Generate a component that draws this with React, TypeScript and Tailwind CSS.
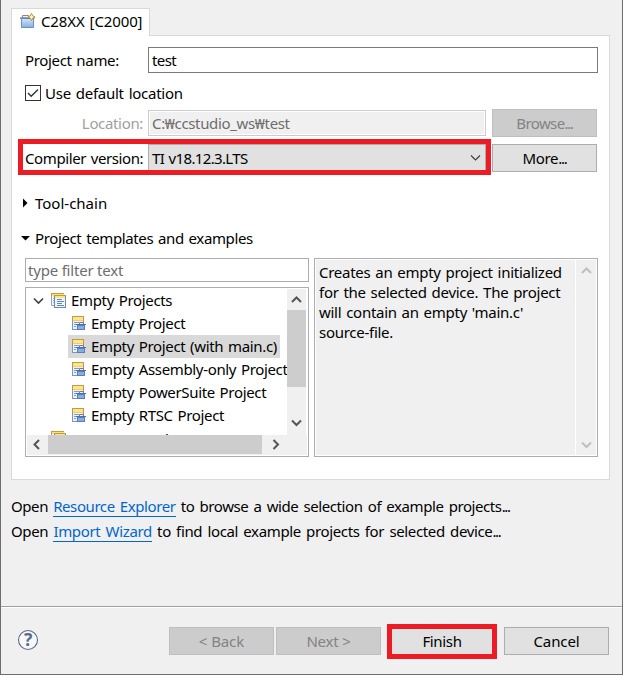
import { useState } from "react"
import type React from "react"

const Chevron: React.FC<{ className?: string; dir: "up" | "down" | "left" | "right"; thick?: number }> = ({
  className,
  dir,
  thick = 2,
}) => {
  const paths = {
    up: "M1 8 L5.5 3.5 L10 8",
    down: "M1 3.5 L5.5 8 L10 3.5",
    left: "M8 1 L3.5 5.5 L8 10",
    right: "M3.5 1 L8 5.5 L3.5 10",
  }
  return (
    <svg width="11" height="11" viewBox="0 0 11 11" className={className} fill="none" stroke="currentColor" strokeWidth={thick}>
      <path d={paths[dir]} />
    </svg>
  )
}

const ProjectTabIcon = () => (
  <svg width="16" height="16" viewBox="0 0 16 16" className="shrink-0">
    <defs>
      <linearGradient id="box" x1="0" y1="0" x2="0" y2="1">
        <stop offset="0" stopColor="#d3e5f8" />
        <stop offset="1" stopColor="#86aedd" />
      </linearGradient>
    </defs>
    <path d="M2.5 4.5v-2h6v2" fill="#f4eee4" stroke="#a08468" />
    <path d="M1.5 5.5h12v9h-12z" fill="url(#box)" stroke="#6a90c6" />
    <path d="M0 5h14.5" stroke="#5b7fb0" strokeWidth="1.4" />
    <path d="M11.5 0.5l1.2 2.3 2.3 1.2-2.3 1.2-1.2 2.3-1.2-2.3L8 4l2.3-1.2z" fill="#fff8d0" stroke="#b8902c" />
  </svg>
)

const FolderIcon = () => (
  <svg width="15" height="15" viewBox="0 0 15 15" className="shrink-0">
    <path d="M0.5 0.5h11v12h-11z" fill="#eef5fd" stroke="#8fa3bd" />
    <path d="M0 0.5h13M0.5 0v3" stroke="#c79a33" />
    <rect x="1" y="1" width="12" height="2" fill="#fbe08a" />
    <path d="M2 5.5h1M2 7.5h1M2 9.5h1" stroke="#9fb6d3" />
    <rect x="3.5" y="2.5" width="11" height="12" fill="#edf5fd" stroke="#7288a8" />
    <path d="M3 2.5h12" stroke="#c79a33" />
    <rect x="4" y="3" width="10" height="2" fill="#fbe38f" />
    <path d="M6 6.5h5M6 8.5h7M6 10.5h5M6 12.5h7" stroke="#6486b8" />
  </svg>
)

const TemplateIcon = () => (
  <svg width="14" height="14" viewBox="0 0 14 14" className="shrink-0">
    <rect x="0.5" y="0.5" width="11" height="13" fill="#e8f2fc" stroke="#7f95b4" />
    <rect x="0.5" y="0.5" width="11" height="4" fill="#fbe590" stroke="#c9983a" />
    <path d="M1 4.5h10" stroke="#f3cf62" />
    <path d="M2 6.5h5M2 8.5h2M2 10.5h2" stroke="#7f9dc6" />
    <path d="M7.5 8.5v-2h4v2" fill="none" stroke="#8a7480" />
    <path d="M4 8.5h10" stroke="#54709f" />
    <rect x="5.5" y="9.5" width="7" height="4" fill="#86aee4" stroke="#5a7dbb" />
  </svg>
)

const Dots = () => <span className="tracking-[-1.3px]">...</span>

const Button: React.FC<{ children: React.ReactNode; disabled?: boolean; className?: string }> = ({
  children,
  disabled,
  className = "",
}) => (
  <button
    disabled={disabled}
    className={`h-7 w-[105px] shrink-0 border text-center leading-[26px] ${
      disabled ? "border-[#bfbfbf] bg-[#cccccc] text-[#838383]" : "border-[#adadad] bg-[#e1e1e1] text-black"
    } ${className}`}
  >
    {children}
  </button>
)

const templates = [
  "Empty Project",
  "Empty Project (with main.c)",
  "Empty Assembly-only Project",
  "Empty PowerSuite Project",
  "Empty RTSC Project",
]

const TemplateTree = () => {
  const [selected, setSelected] = useState("Empty Project (with main.c)")

  return (
    <div className="mt-[5px] flex h-[170px] flex-col border border-[#abadb3] bg-white p-px">
      <div className="flex h-[146px]">
        <div className="w-[260px] overflow-hidden whitespace-nowrap">
          <div className="flex h-[23px] items-center pl-1.5">
            <Chevron dir="down" thick={1.6} className="text-[#404040]" />
            <span className="ml-[7px] flex"><FolderIcon /></span>
            <span className="ml-[5px] pb-0.5">Empty Projects</span>
          </div>
          {templates.map((name) => (
            <div key={name} className="flex h-[23px] pl-[41px]" onClick={() => setSelected(name)}>
              <div className={`flex items-center pl-1 pr-[3px] ${selected === name ? "bg-[#d9d9d9]" : ""}`}>
                <span className="flex pb-px"><TemplateIcon /></span>
                <span className="ml-[5px] pb-0.5">{name}</span>
              </div>
            </div>
          ))}
          <div className="flex h-[23px] items-center pl-6">
            <FolderIcon />
            <span className="ml-[5px]">Empty Examples</span>
          </div>
        </div>
        <div className="flex w-[19px] flex-col items-center bg-[#f0f0f0]">
          <div className="flex h-[21px] items-center"><Chevron dir="up" className="text-[#555]" /></div>
          <div className="h-[77px] w-full bg-[#cdcdcd]" />
          <Chevron dir="down" className="mt-[30px] text-[#555]" />
        </div>
      </div>
      <div className="flex h-5 items-center bg-[#f0f0f0] pb-px pl-1">
        <Chevron dir="left" className="text-[#555]" />
        <div className="ml-1.5 mr-2 h-[19px] w-[214px] self-start bg-[#cdcdcd]" />
        <Chevron dir="right" className="text-[#555]" />
      </div>
    </div>
  )
}

const App: React.FC = () => {
  const [useDefault, setUseDefault] = useState(true)

  return (
    <div className="flex h-[675px] w-[623px] flex-col overflow-hidden border-x border-b border-[#6e6e70] bg-[#f0f0f0] font-['Noto_Sans','Noto_Sans_CJK_KR',sans-serif] text-[15px] leading-5 tracking-[-0.34px] text-black [word-spacing:1.2px]">
      <div className="h-[606px] px-2.5 pt-2">
        <div className="relative z-10 flex h-7 w-[139px] items-center border border-b-0 border-[#d9d9d9] bg-white pl-2">
          <span className="flex pb-[3px]"><ProjectTabIcon /></span>
          <span className="ml-[5px] whitespace-nowrap pb-[3px] tracking-[-0.12px]">C28XX [C2000]</span>
        </div>
        <div className="-mt-px h-[445px] w-[599px] border border-[#d9d9d9] bg-white pl-[13px] pr-[11px] pt-[11px]">
          <div className="flex h-[26px] items-center">
            <label className="w-[123px]">Project name:</label>
            <input className="h-[26px] w-[450px] border border-[#7a7a7a] bg-white px-[3px] tracking-[-0.6px]" defaultValue="test" />
          </div>
          <label className="mt-2.5 flex h-5 items-center">
            <button
              onClick={() => setUseDefault(!useDefault)}
              className="flex size-4 items-center justify-center border border-[#333] bg-white"
            >
              {useDefault && (
                <svg width="12" height="12" viewBox="0 0 12 12" fill="none" stroke="#333" strokeWidth="1.4">
                  <path d="M1 6l3.2 3.2L11 2.4" />
                </svg>
              )}
            </button>
            <span className="ml-1 tracking-[-0.25px]">Use default location</span>
          </label>
          <div className="mt-[6px] flex h-7 items-center">
            <span className="w-[123px] pr-[5px] text-right text-[#a0a0a0]">Location:</span>
            <div className="h-[26px] w-[338px] border border-[#cccccc] bg-white p-px">
              <div className="h-full bg-[#f0f0f0] px-0.5 leading-[22px] text-[#6d6d6d]">C:₩ccstudio_ws₩test</div>
            </div>
            <Button disabled className="ml-1.5 tracking-[-0.6px]">Browse<Dots /></Button>
          </div>
          <div className="-ml-[7px] mt-0.5 flex h-9 items-center">
            <div className="flex h-9 w-[473px] border-5 border-[#ed1c24] bg-white">
              <span className="w-[125px] whitespace-nowrap pl-0.5 leading-[28px] tracking-[-0.4px]">Compiler version:</span>
              <div className="flex flex-1 items-center justify-between border-x border-t border-[#adadad] bg-[#e1e1e1] pl-[3px] pr-1">
                <span className="tracking-[-0.65px]">TI v18.12.3.LTS</span>
                <Chevron dir="down" thick={1.2} className="text-[#404040]" />
              </div>
            </div>
            <Button className="ml-px mt-0.5">More<Dots /></Button>
          </div>
          <div className="mt-[18px] flex h-5 items-center">
            <svg width="8" height="10" viewBox="0 0 8 10" className="-ml-1"><path d="M2 0.5l4.5 4.5L2 9.5z" /></svg>
            <span className="ml-1.5 tracking-normal">Tool-chain</span>
          </div>
          <div className="mt-[15px] flex h-5 items-center">
            <svg width="9" height="8" viewBox="0 0 9 8" className="-ml-1"><path d="M0 2h9L4.5 6.5z" /></svg>
            <span className="ml-[5px] tracking-[-0.37px]">Project templates and examples</span>
          </div>
          <div className="mt-2.5 flex gap-[5px]">
            <div className="w-[284px]">
              <input
                className="block h-6 w-full border border-[#abadb3] bg-white px-0.5 tracking-[-0.2px] placeholder:text-[#6d6d6d]"
                placeholder="type filter text"
              />
              <TemplateTree />
            </div>
            <div className="h-[199px] w-[284px] border border-[#abadb3] bg-white p-px">
              <div className="flex h-full gap-px">
                <div className="w-[259px] whitespace-nowrap bg-[#f0f0f0] pl-[3px] pt-0.5 tracking-[-0.27px]">
                  <p>Creates an empty project initialized</p>
                  <p>for the selected device. The project</p>
                  <p>will contain an empty 'main.c'</p>
                  <p>source-file.</p>
                </div>
                <div className="flex flex-1 flex-col items-center justify-between bg-[#f0f0f0] py-[5px] text-[#bfbfbf]">
                  <Chevron dir="up" />
                  <Chevron dir="down" />
                </div>
              </div>
            </div>
          </div>
        </div>
        <div className="mt-[14px] whitespace-nowrap leading-[25px] [word-spacing:1.7px]">
          <p className="tracking-[-0.42px]">
            Open <a href="#" className="border-b border-[#0066cc] text-[#0066cc]">Resource Explorer</a> to browse a wide selection of example projects<Dots />
          </p>
          <p className="tracking-[-0.36px]">
            Open <a href="#" className="border-b border-[#0066cc] text-[#0066cc]">Import Wizard</a> to find local example projects for selected device<Dots />
          </p>
        </div>
      </div>
      <div className="flex flex-1 border-t border-[#a0a0a0]">
        <div className="flex flex-1 items-start border-t border-white pl-4 pt-4">
          <svg width="22" height="22" viewBox="0 0 22 22" className="mt-[5px]">
            <circle cx="11" cy="11" r="9.5" fill="#f7f8fa" stroke="#5a6b88" strokeWidth="1.1" />
            <text x="11" y="17" textAnchor="middle" fontSize="17.5" fontWeight="700" fill="#5a6b88">?</text>
          </svg>
          <Button disabled className="ml-[130px] mt-[3px] tracking-[-0.1px]">&lt; Back</Button>
          <Button disabled className="ml-0.5 mt-[3px] tracking-[-0.2px]">Next &gt;</Button>
          <button className="ml-1.5 h-[35px] w-[110px] border-5 border-[#ed1c24] bg-[#e1e1e1] pb-0.5">Finish</button>
          <Button className="ml-[7px] mt-[3px] tracking-[-0.1px]">Cancel</Button>
        </div>
      </div>
    </div>
  )
}

export default App
